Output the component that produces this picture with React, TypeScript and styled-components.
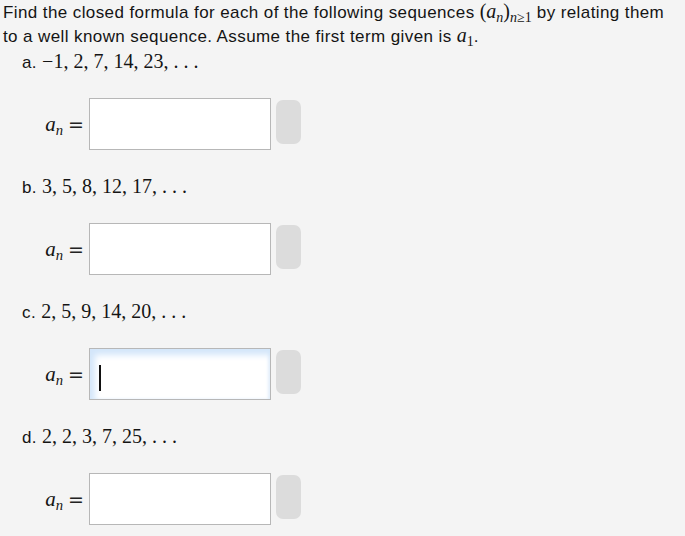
import styled, { createGlobalStyle } from "styled-components";

const Global = createGlobalStyle`
  body {
    margin: 0;
    background: #f4f4f4;
    font-family: "Liberation Sans", Arial, sans-serif;
    font-size: 17px;
    letter-spacing: 0.4px;
    color: #141414;
  }
`;

const Page = styled.div`
  padding: 0 3px;
`;

const Intro = styled.p`
  margin: 0;
  line-height: 23px;
  white-space: nowrap;
`;

const M = styled.span<{ $size?: number }>`
  font-family: "Liberation Serif", "Times New Roman", serif;
  font-size: ${(p) => p.$size ?? 20}px;
  letter-spacing: 0;
`;

const I = styled.i`
  font-family: "Liberation Serif", "Times New Roman", serif;
  font-style: italic;
`;

const Sub = styled.sub`
  font-size: 0.7em;
  vertical-align: -0.25em;
  line-height: 0;
`;

const Item = styled.div`
  padding-bottom: 23px;
`;

const SeqLine = styled.div`
  height: 26px;
  line-height: 26px;
  padding-left: 19px;
  white-space: nowrap;
`;

const Row = styled.div`
  display: flex;
  align-items: center;
  margin-top: 24px;
  height: 52px;
`;

const Lhs = styled.div`
  width: 81px;
  text-align: right;
  padding-right: 5px;
  font-family: "Liberation Serif", "Times New Roman", serif;
  font-size: 21px;
  letter-spacing: 0;
  white-space: nowrap;
`;

const Eq = styled.span`
  margin-left: 5px;
  font-family: "DejaVu Sans", sans-serif;
  font-size: 19px;
  color: #222;
`;

const Box = styled.div<{ $focused?: boolean }>`
  box-sizing: border-box;
  width: 182px;
  height: 52px;
  border: 1px solid #b7b7b7;
  background: #fff;
  display: flex;
  align-items: center;
  padding-left: 9px;
  box-shadow: ${(p) =>
    p.$focused ? "inset 5px 6px 6px #d3e6fa, inset -2px 0 3px #e3effb" : "none"};
`;

const Caret = styled.span`
  display: block;
  width: 1.5px;
  height: 26px;
  margin-top: 8px;
  background: #111;
`;

const Check = styled.div`
  width: 25px;
  height: 44px;
  margin-left: 5px;
  margin-bottom: 4px;
  border-radius: 7px;
  background: #dcdcdc;
`;

const items = [
  { label: "a.", seq: "\u22121, 2, 7, 14, 23, . . ." },
  { label: "b.", seq: "3, 5, 8, 12, 17, . . ." },
  { label: "c.", seq: "2, 5, 9, 14, 20, . . .", focused: true },
  { label: "d.", seq: "2, 2, 3, 7, 25, . . ." },
];

export default function App() {
  return (
    <Page>
      <Global />
      <Intro>
        Find the closed formula for each of the following sequences{" "}
        <M $size={20}>
          (<I>a</I>
          <Sub>
            <I>n</I>
          </Sub>
          )
          <Sub>
            <I>n</I>≥1
          </Sub>
        </M>{" "}
        by relating them
        <br />
        to a well known sequence. Assume the first term given is{" "}
        <M $size={20}>
          <I>a</I>
          <Sub>1</Sub>
        </M>
        .
      </Intro>
      {items.map((it) => (
        <Item key={it.label}>
          <SeqLine>
            {it.label} <M>{it.seq}</M>
          </SeqLine>
          <Row>
            <Lhs>
              <I>a</I>
              <Sub>
                <I>n</I>
              </Sub>
              <Eq>=</Eq>
            </Lhs>
            <Box $focused={it.focused}>{it.focused && <Caret />}</Box>
            <Check />
          </Row>
        </Item>
      ))}
    </Page>
  );
}
